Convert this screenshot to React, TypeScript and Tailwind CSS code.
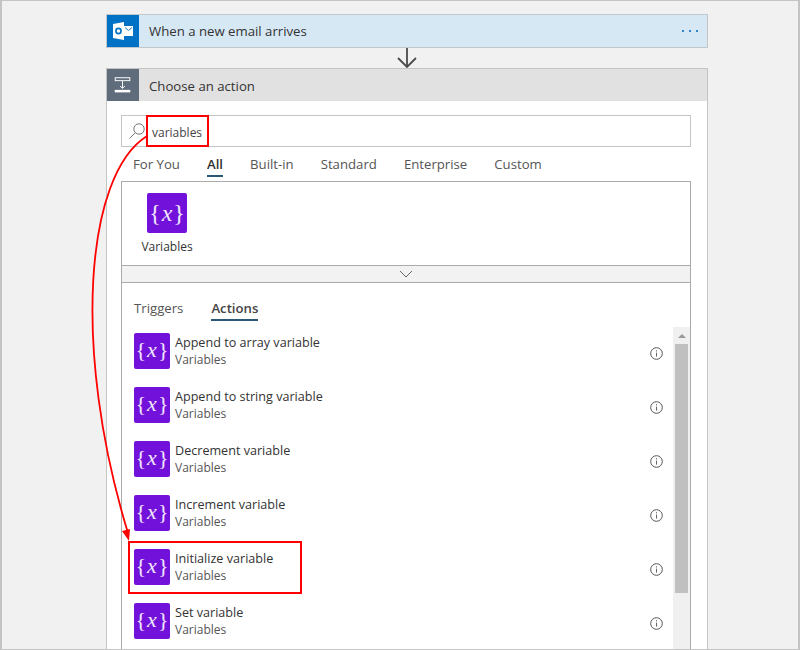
const font = "font-['Open_Sans',sans-serif]";

const actions = [
  'Append to array variable',
  'Append to string variable',
  'Decrement variable',
  'Increment variable',
  'Initialize variable',
  'Set variable',
];

const tabs = ['For You', 'All', 'Built-in', 'Standard', 'Enterprise', 'Custom'];

function VarIcon({ large }: { large?: boolean }) {
  return (
    <div
      className={
        large
          ? "flex h-10 w-10 items-center justify-center rounded-[2px] bg-[#7211d9] font-['Liberation_Serif',serif] text-[24px] leading-none text-white/90"
          : "flex h-9 w-9 shrink-0 items-center justify-center rounded-[2px] bg-[#7211d9] pb-[3px] font-['Liberation_Serif',serif] text-[22px] leading-none text-white/90"
      }
    >
      <span>{'{'}</span>
      <span className="px-[1px] italic">x</span>
      <span>{'}'}</span>
    </div>
  );
}

function OutlookLogo() {
  return (
    <svg width="24" height="24" viewBox="0 0 24 24">
      <path d="M13 7h9v10h-9z" fill="#fff" />
      <path d="M14 8.5l3.5 3 3.5-3" fill="none" stroke="#0072c6" strokeWidth="0.9" />
      <path d="M2 5l11-2v18L2 19z" fill="#fff" />
      <circle cx="7.5" cy="12" r="2.6" fill="none" stroke="#0072c6" strokeWidth="1.6" />
    </svg>
  );
}

function ChooseIcon() {
  return (
    <svg width="33" height="33" viewBox="0 0 33 33" fill="none">
      <rect x="8.5" y="8.5" width="15" height="3" stroke="#fff" />
      <path d="M16 12v7M13.5 17l2.5 2.5 2.5-2.5" stroke="#fff" />
      <rect x="8" y="21" width="16" height="2.6" fill="#fff" />
    </svg>
  );
}

function InfoIcon() {
  return (
    <svg width="13" height="13" viewBox="0 0 13 13" fill="none" className="shrink-0">
      <circle cx="6.5" cy="6.5" r="5.8" stroke="#555" />
      <path d="M6.5 5.6v4M6.5 3.2v1.2" stroke="#666" />
    </svg>
  );
}

export default function App() {
  return (
    <div className={`relative h-[650px] w-[800px] overflow-hidden border-x-2 border-y border-[#c4c4c4] bg-[#f1f1f1] ${font}`}>
      <div className="ml-[104px] mt-[13px] w-[602px]">
        <div className="flex h-[34px] items-center border border-[#c2c7cb] bg-[#d7e8f5]">
          <div className="flex h-full w-[32px] items-center justify-center bg-[#0072c6]">
            <OutlookLogo />
          </div>
          <span className="ml-[10px] pt-[1px] text-[13.2px] text-[#333]">When a new email arrives</span>
          <div className="ml-auto mr-[9px] flex gap-[5px]">
            <span className="h-[2px] w-[2px] bg-[#2f86cc]" />
            <span className="h-[2px] w-[2px] bg-[#2f86cc]" />
            <span className="h-[2px] w-[2px] bg-[#2f86cc]" />
          </div>
        </div>

        <div className="flex h-[20px] justify-center">
          <svg width="20" height="20" viewBox="0 0 20 20" fill="none">
            <path d="M10 0v19M1 10l9 9 9-9" stroke="#4a4a4a" strokeWidth="1.8" />
          </svg>
        </div>

        <div className="h-[590px] border-x border-t border-[#c4c4c4] bg-white">
          <div className="flex h-[32px] items-center bg-[#e1e1e1]">
            <div className="flex h-full w-[32px] items-center justify-center bg-[#5f6c7b]">
              <ChooseIcon />
            </div>
            <span className="ml-[10px] pt-[3px] text-[13.2px] text-[#333]">Choose an action</span>
          </div>

          <div className="px-[14px] pt-[14px]">
            <div className="flex h-[32px] w-[570px] items-center border border-[#c4c4c4] bg-white">
              <svg width="18" height="18" viewBox="0 0 18 18" fill="none" className="ml-[7px]">
                <circle cx="10" cy="7" r="5.2" stroke="#777" />
                <path d="M6.5 10.5L0.5 16.5" stroke="#777" />
              </svg>
              <span className="ml-[5px] pt-[3px] text-[12px] text-[#444]">variables</span>
            </div>

            <div className="flex h-[34px] items-center gap-[27px] pl-[12px] pt-[2px] text-[13.2px] text-[#555]">
              {tabs.map((t) => (
                <span key={t} className={t === 'All' ? 'relative font-semibold text-[#333]' : ''}>
                  {t}
                  {t === 'All' && <span className="absolute -bottom-[2px] left-0 right-0 h-[2px] bg-[#2b5876]" />}
                </span>
              ))}
            </div>

            <div className="h-[470px] w-[570px] border-x border-t border-[#aaa]">
              <div className="flex h-[83px] flex-col items-start pl-[25px] pt-[11px]">
                <div className="flex w-[40px] flex-col items-center">
                  <VarIcon large />
                  <span className="mt-[5px] whitespace-nowrap text-[12px] text-[#333]">Variables</span>
                </div>
              </div>
              <div className="flex h-[18px] items-center justify-center border-y border-[#aaa] bg-[#f2f2f2]">
                <svg width="14" height="8" viewBox="0 0 14 8" fill="none">
                  <path d="M1 1l6 6 6-6" stroke="#666" />
                </svg>
              </div>

              <div className="flex h-[38px] items-end gap-[28px] pl-[12px] text-[13.2px] text-[#555]">
                <span className="pb-[2px]">Triggers</span>
                <span className="relative pb-[2px] font-semibold text-[#444]">
                  Actions
                  <span className="absolute bottom-0 left-0 right-0 h-[2px] bg-[#2b5876]" />
                </span>
              </div>

              <div className="flex">
                <div className="flex-1 pl-[12px] pt-[12px]">
                  {actions.map((a) => (
                    <div key={a} className="mb-[18px] flex h-[36px] items-center">
                      <VarIcon />
                      <div className="ml-[5px] flex flex-col text-[12px] leading-[17px]">
                        <span className="text-[12.6px] font-medium text-[#333]">{a}</span>
                        <span className="text-[#555]">Variables</span>
                      </div>
                      <div className="ml-auto mr-[10px] mt-[4px]">
                        <InfoIcon />
                      </div>
                    </div>
                  ))}
                </div>
                <div className="mt-[6px] flex h-[340px] w-[17px] flex-col items-center bg-[#f0f0f0] px-[2px] pt-[7px]">
                  <div className="h-0 w-0 border-x-[4px] border-b-[4px] border-x-transparent border-b-[#999]" />
                  <div className="mt-[6px] h-[249px] w-[13px] bg-[#c0c0c0]" />
                </div>
              </div>
            </div>
          </div>
        </div>
      </div>

      {/* red callouts over the screenshot */}
      <div className="absolute left-[144px] top-[114px] h-[32px] w-[63px] border-2 border-[#f00]" />
      <div className="absolute left-[126px] top-[540px] h-[53px] w-[174px] border-2 border-[#f00]" />
      <svg className="absolute left-[-2px] top-[-1px]" width="800" height="650" viewBox="0 0 800 650" fill="none">
        <path d="M147 136C85 175 72 350 128 533" stroke="#f00" strokeWidth="1.8" />
        <path d="M129 541l-7-10 8-2z" fill="#f00" />
      </svg>
    </div>
  );
}
